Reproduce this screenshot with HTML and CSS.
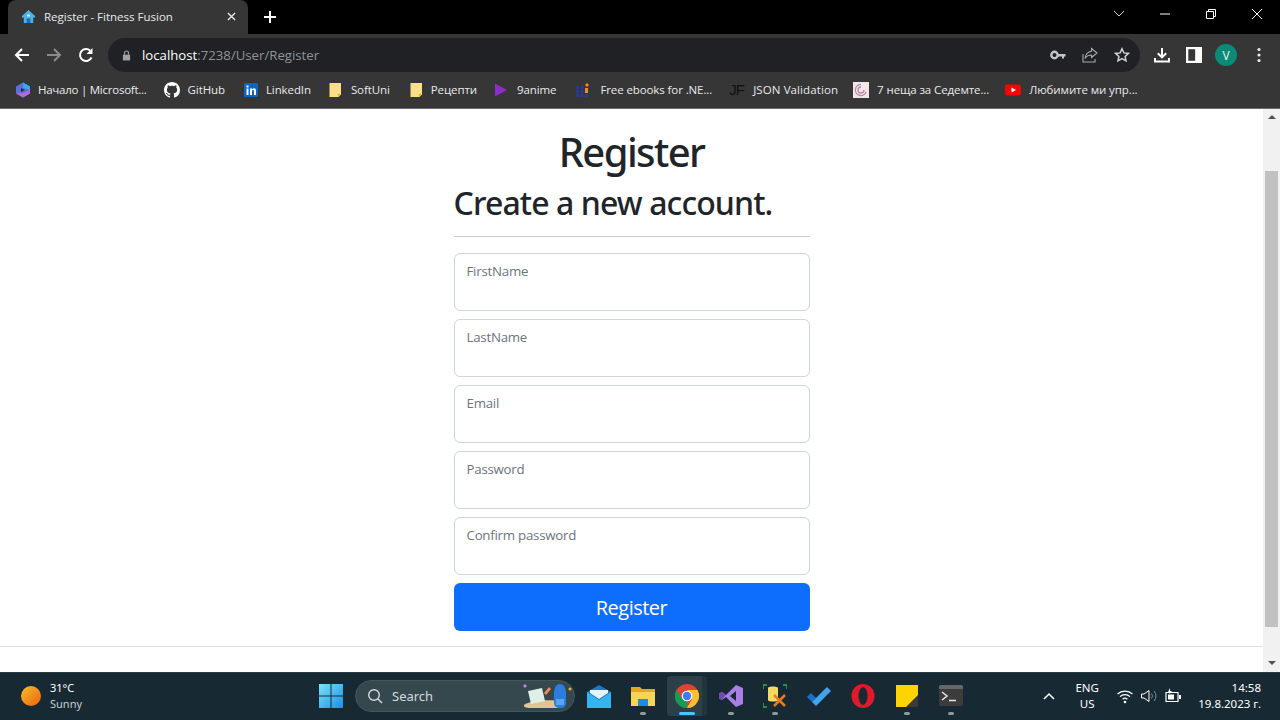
FILE: index.html
```html
<!DOCTYPE html>
<html lang="en">
<head>
<meta charset="utf-8">
<title>Register - Fitness Fusion</title>
<link rel="stylesheet" href="styles.css">
</head>
<body>
<header class="chrome">
  <div class="tabstrip">
    <div class="tab">
      <svg class="fav" viewBox="0 0 16 16"><path d="M8 1 1 7.500V9h2v6h10V9h2V7.500z" fill="#4db2ec"/><path d="M6 15v-5h4v5z" fill="#1b6fb5"/><path d="M6.500 6h3v2h-3z" fill="#d5eefb"/></svg>
      <span class="tab-title">Register - Fitness Fusion</span>
      <svg class="tab-x" viewBox="0 0 10 10"><path d="M1 1l8 8M9 1l-8 8" stroke="#e8eaed" stroke-width="1.500"/></svg>
    </div>
    <svg class="newtab" viewBox="0 0 12 12"><path d="M6 0v12M0 6h12" stroke="#fff" stroke-width="2"/></svg>
    <div class="winctl">
      <svg class="w-ic chev" viewBox="0 0 12 8"><path d="M1 1l5 5 5-5" fill="none" stroke="#cfcfcf" stroke-width="1"/></svg>
      <svg class="w-ic" viewBox="0 0 12 12"><path d="M1 6h10" stroke="#fff" stroke-width="1"/></svg>
      <svg class="w-ic" viewBox="0 0 12 12"><path d="M1.500 3.500h7v7h-7zM3.500 3.500V1.500h7v7H8.500" fill="none" stroke="#fff" stroke-width="1"/></svg>
      <svg class="w-ic" viewBox="0 0 12 12"><path d="M1 1l10 10M11 1L1 11" stroke="#fff" stroke-width="1"/></svg>
    </div>
  </div>
  <div class="toolbar">
    <svg class="nav" viewBox="0 0 16 16"><path d="M15 8H2M8 2 2 8l6 6" fill="none" stroke="#fff" stroke-width="2"/></svg>
    <svg class="nav" viewBox="0 0 16 16"><path d="M1 8h13M8 2l6 6-6 6" fill="none" stroke="#8a8b8c" stroke-width="2"/></svg>
    <svg class="nav nav-last" viewBox="0 0 16 16"><path d="M13.500 10.500A6 6 0 1 1 12.200 3.700" fill="none" stroke="#fff" stroke-width="2"/><path d="M14.500 1v6h-6z" fill="#fff"/></svg>
    <div class="omnibox">
      <svg class="lock" viewBox="0 0 10 12"><path d="M1 5h8v6.500H1z" fill="#a0a1a3"/><path d="M2.800 5V3.200a2.200 2.200 0 0 1 4.400 0V5" fill="none" stroke="#a0a1a3" stroke-width="1.300"/></svg>
      <span class="url"><b>localhost</b>:7238/User/Register</span>
      <svg class="omni-ic" viewBox="0 0 16 10"><circle cx="4.500" cy="5" r="3.200" fill="none" stroke="#c4c5c6" stroke-width="2.400"/><path d="M7 4h8.500v2.500H14v2h-2v-2H7z" fill="#c4c5c6"/></svg>
      <svg class="omni-ic" viewBox="0 0 16 16"><path d="M9.500 1.500l5.500 4.500-5.500 4.500V8c-3 0-5 1-6.500 3.500C3.500 8 5.500 4.800 9.500 4.300zM1 7v8h12v-3" fill="none" stroke="#a9aaab" stroke-width="1.100"/></svg>
      <svg class="omni-ic" viewBox="0 0 16 16"><path d="M8 1.800l1.900 4.100 4.500.5-3.300 3 .9 4.500L8 11.600l-4 2.300.9-4.500-3.300-3 4.500-.5z" fill="none" stroke="#d0d1d2" stroke-width="1.500"/></svg>
    </div>
    <div class="tool-right">
      <svg class="tool-ic" viewBox="0 0 16 16"><path d="M8 1v9M3.800 6.200 8 10.400l4.200-4.200M1 11v3.500h14V11" fill="none" stroke="#fff" stroke-width="2"/></svg>
      <svg class="tool-ic side" viewBox="0 0 14 14"><path d="M1 1h12v12H1z" fill="none" stroke="#fff" stroke-width="2"/><path d="M8 1h5v12H8z" fill="#fff"/></svg>
      <span class="avatar">V</span>
      <svg class="tool-ic dots" viewBox="0 0 4 16"><circle cx="2" cy="2.500" r="1.600" fill="#e8eaed"/><circle cx="2" cy="8" r="1.600" fill="#e8eaed"/><circle cx="2" cy="13.500" r="1.600" fill="#e8eaed"/></svg>
    </div>
  </div>
  <nav class="bookmarks">
    <span class="bm bm-1"><svg viewBox="0 0 16 16"><path d="M8 .5 15 4.500v7L8 15.500 1 11.500v-7z" fill="#5b6fd8"/><path d="M8 .5 15 4.500V8L8 6z" fill="#3aa7e8"/><path d="M1 11.500 8 15.500l7-4V8L8 11z" fill="#b06bd6"/><path d="M6 6l4 2-4 2z" fill="#2a2a3e"/></svg>Начало | Microsoft...</span>
    <span class="bm bm-2"><svg viewBox="0 0 16 16"><path d="M8 0C3.580 0 0 3.580 0 8c0 3.540 2.290 6.530 5.470 7.590.4.070.55-.17.55-.38 0-.19-.01-.82-.01-1.490-2.010.37-2.530-.49-2.690-.94-.09-.23-.48-.94-.82-1.130-.28-.15-.68-.52-.01-.53.630-.01 1.080.58 1.230.82.720 1.210 1.870.87 2.330.66.070-.52.280-.87.510-1.070-1.780-.2-3.640-.89-3.640-3.950 0-.87.310-1.590.82-2.150-.08-.2-.36-1.020.08-2.120 0 0 .67-.21 2.200.82.640-.18 1.320-.27 2-.27s1.360.09 2 .27c1.530-1.040 2.200-.82 2.200-.82.440 1.100.16 1.920.08 2.120.51.56.82 1.270.82 2.150 0 3.070-1.870 3.750-3.650 3.950.29.250.54.730.54 1.480 0 1.070-.01 1.930-.01 2.200 0 .21.150.46.55.38A8.010 8.010 0 0 0 16 8c0-4.420-3.580-8-8-8z" fill="#fff"/></svg>GitHub</span>
    <span class="bm bm-3"><svg viewBox="0 0 16 16"><rect x="1" y="1" width="14" height="14" rx="1" fill="#0a66c2"/><path d="M3.500 6.500h2V13h-2zM3.500 3.500h2v2h-2zM7 6.500h2v1c.5-.8 1.200-1.200 2-1.200 1.500 0 2 1 2 2.500V13h-2V9.200c0-.8-.3-1.200-.9-1.200-.7 0-1.100.5-1.100 1.300V13H7z" fill="#fff"/></svg>LinkedIn</span>
    <span class="bm bm-4"><svg viewBox="0 0 16 16"><path d="M1.500 1h11.500v11.500L10.500 15h-9z" fill="#fbdf85"/><path d="M13 12h-3v3z" fill="#d3ab3e"/></svg>SoftUni</span>
    <span class="bm bm-5"><svg viewBox="0 0 16 16"><path d="M1.500 1h11.500v11.500L10.500 15h-9z" fill="#fbdf85"/><path d="M13 12h-3v3z" fill="#d3ab3e"/></svg>Рецепти</span>
    <span class="bm bm-6"><svg viewBox="0 0 16 16"><path d="M0 1.500 12 8 0 14.500z" fill="#8d2dc8"/></svg>9anime</span>
    <span class="bm bm-7"><svg viewBox="0 0 16 16"><path d="M1 4h3v3H1zM5.500 4h3v3h-3zM1 8h3v3H1zM5.500 8h3v3h-3zM1 12h3v3H1zM5.500 12h3v3h-3zM10 12h3v3h-3z" fill="#2b3a8c"/><path d="M12 1l2 2-2 2-2-2zM10 6h3v5h-3z" fill="#f08a24"/></svg>Free ebooks for .NE...</span>
    <span class="bm bm-8"><span class="jf">JF</span>JSON Validation</span>
    <span class="bm bm-9"><svg viewBox="0 0 16 16"><rect width="16" height="16" fill="#f3e6ea"/><path d="M8 2.500a5.500 5.500 0 1 0 5 7.500M8 5a3 3 0 1 0 3 3" fill="none" stroke="#b98aa0" stroke-width="1.300"/></svg>7 неща за Седемте...</span>
    <span class="bm bm-10"><svg viewBox="0 0 16 16"><rect y="2.500" width="16" height="11" rx="3" fill="#f00"/><path d="M6.500 5.500 11 8l-4.500 2.500z" fill="#fff"/></svg>Любимите ми упр...</span>
  </nav>
</header>

<div class="viewport">
  <main class="page">
    <div class="content">
      <h1 class="title">Register</h1>
      <section class="form-col">
        <h2 class="subtitle">Create a new account.</h2>
        <hr class="rule">
        <div class="field">FirstName</div>
        <div class="field">LastName</div>
        <div class="field">Email</div>
        <div class="field">Password</div>
        <div class="field">Confirm password</div>
        <button class="submit" type="button">Register</button>
      </section>
    </div>
    <div class="foot-rule"></div>
  </main>
  <div class="scrollbar">
    <span class="arrow up"></span>
    <div class="track"><div class="thumb"></div></div>
    <span class="arrow down"></span>
  </div>
</div>

<footer class="taskbar">
  <div class="weather">
    <span class="sun"></span>
    <div class="weather-text"><span class="temp">31°C</span><span class="cond">Sunny</span></div>
  </div>
  <div class="apps">
    <svg class="app start" viewBox="0 0 24 24"><defs><linearGradient id="wg" x1="0" y1="0" x2="1" y2="1"><stop offset="0" stop-color="#7be3f7"/><stop offset="1" stop-color="#1a8fe8"/></linearGradient></defs><path d="M0 0h11.500v11.500H0zM12.500 0H24v11.500H12.500zM0 12.500h11.500V24H0zM12.500 12.500H24V24H12.500z" fill="url(#wg)"/></svg>
    <div class="search">
      <svg class="search-ic" viewBox="0 0 16 16"><circle cx="7" cy="7" r="5.300" fill="none" stroke="#d5dadb" stroke-width="1.400"/><path d="M11 11l4 4" stroke="#d5dadb" stroke-width="1.400"/></svg>
      <span class="search-text">Search</span>
      <svg class="search-art" viewBox="0 0 52 30"><path d="M2 24c6-5 30-6 40-3 2 3 0 6-6 6H8c-4 0-7-1-6-3z" fill="#e3c48e"/><path d="M6 10l14-3 3 13-14 3z" fill="#dfeee6"/><path d="M22 12 27 6l2 2-5 6z" fill="#f08a5a"/><path d="M32 12c0-6 3-9 6-9s6 3 6 9v10c0 3-2 5-6 5s-6-2-6-5z" fill="#2b7de0"/><path d="M34 18h8v6h-8z" fill="#5aa4f0"/><path d="M1 5l2-2 2 2-2 2z" fill="#c880e8"/><circle cx="48" cy="8" r="1.500" fill="#f0b030"/></svg>
    </div>
    <div class="slot first"><svg class="app" viewBox="0 0 24 24"><path d="M0 8 12 1l12 7v16H0z" fill="#1b78c8"/><path d="M0 8l12 8 12-8v16H0z" fill="#35b4f0"/><path d="M3 6h18v3l-9 6-9-6z" fill="#e4f4fc"/></svg></div>
    <div class="slot"><svg class="app" viewBox="0 0 24 24"><path d="M0 3h9l2 2h13v17H0z" fill="#e9a520"/><path d="M0 8h24v14H0z" fill="#fbd356"/><path d="M7 15h10v7H7z" fill="#1a8fe0"/></svg><i class="pip"></i></div>
    <div class="slot active"><svg class="app" viewBox="0 0 24 24"><circle cx="12" cy="12" r="12" fill="#db4437"/><path d="M12 24a12 12 0 0 1-10.400-18L7 15l5 2z" fill="#0f9d58"/><path d="M12 24a12 12 0 0 0 10.400-18H12l5 9z" fill="#fbc02d"/><circle cx="12" cy="12" r="5.300" fill="#fff"/><circle cx="12" cy="12" r="4.200" fill="#3b7ded"/></svg><i class="pip wide"></i></div>
    <div class="slot"><svg class="app" viewBox="0 0 24 24"><path d="M17 1l7 3v16l-7 3L7 13l-4 3-3-1.500v-5L3 8l4 3z" fill="#a97fe6"/><path d="M17 7v10l-6-5z" fill="#172a33"/><path d="M0 9.500 3 8l4 3-2 2-2 3-3-1.500z" fill="#6d4cb0"/></svg><i class="pip"></i></div>
    <div class="slot"><svg class="app" viewBox="0 0 24 24"><path d="M5 4c0-2 10-2 10 0v12c0 2-10 2-10 0z" fill="#f6d95e"/><path d="M0 5V1h4M20 1h4v4M0 19v4h4" fill="none" stroke="#3aa55a" stroke-width="1.500"/><path d="M11 11l11 11M22 11 11 22" stroke="#e87a20" stroke-width="2.500"/></svg><i class="pip"></i></div>
    <div class="slot"><svg class="app" viewBox="0 0 24 24"><path d="M0 13l4-4 5 5-4 4z" fill="#1a6fc8"/><path d="M5 18 20 3l4 4L9 22z" fill="#42a4ee"/></svg></div>
    <div class="slot"><svg class="app" viewBox="0 0 24 24"><ellipse cx="12" cy="12" rx="11.500" ry="12" fill="#e01a2b"/><ellipse cx="12" cy="12" rx="4.500" ry="9" fill="#172a33"/></svg></div>
    <div class="slot"><svg class="app" viewBox="0 0 24 24"><path d="M1 1h22v14l-8 8H1z" fill="#fdd400"/><path d="M23 11v12H11z" fill="#3a3a3a"/></svg><i class="pip"></i></div>
    <div class="slot"><svg class="app" viewBox="0 0 24 24"><rect y="1" width="24" height="21" rx="2" fill="#3c3c3c"/><path d="M0 3a2 2 0 0 1 2-2h20a2 2 0 0 1 2 2v2H0z" fill="#666"/><path d="M3 8l5 4-5 4" fill="none" stroke="#e8e8e8" stroke-width="1.500"/><path d="M10 16.500h7" stroke="#e8e8e8" stroke-width="1.500"/></svg><i class="pip"></i></div>
  </div>
  <div class="tray">
    <svg class="caret" viewBox="0 0 12 8"><path d="M1 7l5-5 5 5" fill="none" stroke="#fff" stroke-width="1.500"/></svg>
    <div class="lang"><span>ENG</span><span>US</span></div>
    <svg class="tray-ic" viewBox="0 0 16 16"><path d="M.5 6a11 11 0 0 1 15 0M3 8.700a7 7 0 0 1 10 0M5.700 11.200a3.300 3.300 0 0 1 4.600 0" fill="none" stroke="#fff" stroke-width="1.200"/><circle cx="8" cy="14" r="1.300" fill="#fff"/></svg>
    <svg class="tray-ic" viewBox="0 0 16 16"><path d="M.5 6h2.500L8 2.500v11L3 10H.5z" fill="none" stroke="#fff" stroke-width="1"/><path d="M10.500 5.500a4 4 0 0 1 0 5M13 3a7.500 7.500 0 0 1 0 10" fill="none" stroke="#7d8a8f" stroke-width="1"/></svg>
    <svg class="tray-ic batt" viewBox="0 0 16 16"><path d="M1 4.500h12v9H1z" fill="none" stroke="#fff" stroke-width="1.200"/><path d="M3 6.500h6v5H3z" fill="#fff"/><path d="M14 7h2v4h-2z" fill="#fff"/><path d="M5 0 3 4h2L4 7l3-4H5z" fill="#fff"/></svg>
    <div class="clock"><span>14:58</span><span>19.8.2023 г.</span></div>
  </div>
</footer>
</body>
</html>
```
FILE: styles.css
```css
* { box-sizing: border-box; }
html, body { height: 100%; margin: 0; }
body {
  display: flex;
  flex-direction: column;
  width: 1280px;
  height: 720px;
  overflow: hidden;
  background: #fff;
  font-family: "Open Sans", "Noto Sans", sans-serif;
}
svg { display: block; flex: none; }

.chrome { flex: none; background: #363636; color: #fff; font-family: "Open Sans", "Noto Sans", sans-serif; }
.tabstrip { display: flex; align-items: center; height: 34px; background: #000; padding-left: 8px; }
.tab {
  display: flex; align-items: center; align-self: flex-end;
  width: 240px; height: 34px; padding: 0 12px 2px 13px;
  background: #363636; border-radius: 8px 8px 0 0;
  font-size: 11.5px; color: #e8eaed;
}
.fav { width: 15px; height: 15px; }
.tab-title { margin-left: 8px; flex: 1; }
.tab-x { width: 9px; height: 9px; }
.newtab { width: 12px; height: 12px; margin-left: 16px; }
.winctl { display: flex; align-items: center; margin-left: auto; gap: 34px; padding-right: 17px; padding-bottom: 6px; }
.w-ic { width: 12px; height: 12px; }
.chev { width: 12px; height: 8px; }

.toolbar { display: flex; align-items: center; height: 42px; padding: 0 11px 0 14px; }
.nav { width: 16px; height: 16px; margin-right: 16px; }
.nav-last { margin-right: 14px; }
.omnibox {
  display: flex; align-items: center;
  width: 1032px; height: 34px; padding: 0 10px 0 14px;
  background: #202124; border-radius: 17px;
}
.lock { width: 9px; height: 11px; }
.url { margin-left: 11px; flex: 1; font-size: 13.2px; color: #8f9499; }
.url b { font-weight: 400; color: #fff; }
.omni-ic { width: 16px; height: 16px; margin-left: 16px; }
.tool-right { display: flex; align-items: center; margin-left: 14px; }
.tool-ic { width: 16px; height: 16px; margin-right: 16px; }
.tool-ic.side { margin-right: 13px; }
.avatar {
  display: flex; align-items: center; justify-content: center;
  width: 22px; height: 22px; margin-right: 16px; border-radius: 50%;
  background: #0b8a78; font-size: 12px; color: #e8f5f2;
}
.dots { width: 4px; margin-right: 0; margin-left: 4px; }

.bookmarks {
  display: flex; align-items: center;
  height: 33px; padding: 0 0 5px 15px;
  border-bottom: 1px solid #6b6b6b;
  font-size: 11.5px; letter-spacing: -.1px; color: #e8eaed;
}
.bm { display: flex; align-items: center; gap: 7px; white-space: nowrap; }
.bm svg { width: 16px; height: 16px; }
.bm-1 { letter-spacing: -.25px; }
.bm-2 { margin-left: 17px; gap: 8px; }
.bm-3 { margin-left: 18px; }
.bm-4 { margin-left: 17px; }
.bm-5 { margin-left: 19px; gap: 6px; }
.bm-6 { margin-left: 18px; gap: 6px; }
.bm-7 { margin-left: 19px; gap: 9px; }
.bm-8 { margin-left: 17px; letter-spacing: .1px; }
.bm-9 { margin-left: 15px; gap: 8px; }
.bm-10 { margin-left: 16px; gap: 8px; }
.jf { width: 17px; font-size: 15px; color: #111; font-family: "Liberation Sans", sans-serif; letter-spacing: -1px; }

.viewport { flex: 1; display: flex; min-height: 0; }
.page { flex: 1; display: flex; flex-direction: column; min-width: 0; overflow: hidden; color: #212529; }
.content { display: flex; flex-direction: column; align-items: center; }
.title { margin: 19px 0 0; font-family: "Noto Sans", sans-serif; font-size: 40px; line-height: 48px; font-weight: 500; letter-spacing: -1.6px; }
.form-col { width: 356px; display: flex; flex-direction: column; }
.subtitle { margin: 8px 0 0; font-family: "Noto Sans", sans-serif; font-size: 32px; line-height: 38px; font-weight: 500; letter-spacing: -.9px; white-space: nowrap; }
.rule { width: 100%; height: 1px; margin: 14px 0 16px; border: 0; background: #c9cbce; }
.field {
  height: 58px; margin-bottom: 8px; padding: 7px 12px;
  border: 1px solid #ced4da; border-radius: 6px;
  font-size: 13.3px; line-height: 20px; color: #6c757d; letter-spacing: -.25px;
}
.submit {
  height: 48px; padding: 2px 0 0; border: 0; border-radius: 6px;
  background: #0d6efd; color: #fff;
  font: 400 20px/30px "Open Sans", "Noto Sans", sans-serif; letter-spacing: -.5px;
}
.foot-rule { margin-top: 15px; height: 1px; background: #dee2e6; }

.scrollbar { flex: none; width: 17px; display: flex; flex-direction: column; background: #f1f1f1; }
.track { flex: 1; padding: 45px 2px 28px; display: flex; }
.thumb { flex: 1; background: #c1c1c1; }
.arrow { flex: none; height: 17px; position: relative; }
.arrow.up::after, .arrow.down::after {
  content: ""; position: absolute; left: 5px; width: 0; height: 0;
  border-left: 4px solid transparent; border-right: 4px solid transparent;
}
.arrow.up::after { top: 6px; border-bottom: 4px solid #505050; }
.arrow.down::after { top: 6px; border-top: 4px solid #505050; }

.taskbar {
  flex: none; display: flex; align-items: center;
  height: 48px; background: #172a33; color: #fff; font-family: "Noto Sans", sans-serif;
  box-shadow: inset 0 1px 0 #2c3c44;
}
.weather { display: flex; align-items: center; margin-left: 21px; width: 298px; }
.sun { width: 20px; height: 20px; border-radius: 50%; background: linear-gradient(135deg, #f5c02a, #ee6010); }
.weather-text { display: flex; flex-direction: column; margin-left: 9px; font-size: 11px; line-height: 16px; }
.cond { color: #c5cdd0; }
.apps { display: flex; align-items: center; }
.app { width: 24px; height: 24px; position: relative; }
.start { margin-right: 12px; }
.search {
  display: flex; align-items: center; position: relative;
  width: 220px; height: 32px; padding-left: 11px; border-radius: 16px;
  background: #34484e; border: 1px solid #43555a; color: #d5dadb; font-size: 13px;
}
.search-ic { width: 16px; height: 16px; }
.search-text { margin-left: 9px; }
.search-art { position: absolute; right: 0; top: 0; width: 52px; height: 30px; }
.slot { position: relative; display: flex; align-items: center; justify-content: center; width: 44px; height: 40px; }
.slot.first { margin-left: 2px; }
.slot.active::before {
  content: ""; position: absolute; left: 2px; top: 0; width: 40px; height: 40px;
  border-radius: 4px; background: linear-gradient(to right, #2d4048 35px, #22353d 35px);
}
.pip { position: absolute; bottom: 1px; left: 19px; width: 6px; height: 3px; border-radius: 2px; background: #8f9a9e; }
.pip.wide { left: 14px; width: 16px; background: #4fc3f7; }

.tray { margin-left: auto; display: flex; align-items: center; padding-right: 19px; font-size: 11px; }
.caret { width: 12px; height: 8px; margin-right: 20px; }
.lang { display: flex; flex-direction: column; align-items: center; width: 24px; font-size: 11.5px; line-height: 16px; margin-right: 18px; }
.tray-ic { width: 16px; height: 16px; margin-right: 8px; }
.batt { margin-right: 17px; }
.clock { display: flex; flex-direction: column; align-items: flex-end; font-size: 11.5px; line-height: 16px; }
```
